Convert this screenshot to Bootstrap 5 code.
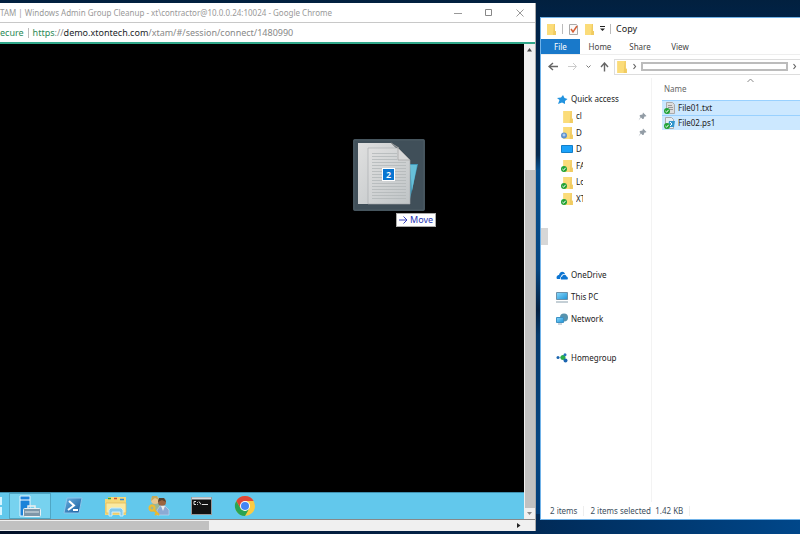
<!DOCTYPE html>
<html lang="en">
<head>
<meta charset="utf-8">
<meta name="viewport" content="width=device-width, initial-scale=1">
<title>Remote session and file explorer</title>
<link href="https://cdn.jsdelivr.net/npm/bootstrap@5.3.0/dist/css/bootstrap.min.css" rel="stylesheet">
<style>
body{font-family:"Noto Sans","Open Sans",sans-serif;font-size:8px;line-height:12px;color:#222;
 background:linear-gradient(90deg,#020f27 0,#04244a 60%,#002d5c 70%,#00478a 100%) bottom/100% 20px no-repeat,linear-gradient(#02203f,#002348 24px,#04294f 155px,#07508f 170px,#064580 270px,#041f40 310px,#06396a 335px,#064580 440px,#003c78)}
button{border:0;background:none;padding:0;color:inherit}
a{color:inherit;text-decoration:none}
svg{display:block;flex:none}
.desk{gap:4px;padding-top:3px}
.browser{width:67%;margin-bottom:3px;background:#fff;border-right:1px solid #aaa}
.caption{height:20px;border-bottom:1px solid #c8c8c8;color:#999}
.caption button{width:31px;height:19px;display:flex;align-items:center;justify-content:center}
.addr{height:21px;border-bottom:2px solid #30a78a;font-size:9px;color:#888;gap:4px}
.green{color:#2b8a57}
.sep{width:1px;height:10px;background:#bbb}
.bar{height:27px;background:#62c8ec;border-top:1px solid #3f8fae}
.bar button{width:43px;display:flex;align-items:center;justify-content:center}
.bar .start{width:9px;justify-content:flex-start}
.bar .current{width:42px;background:#77d2ef;border:1px solid #4fa6c4}
.vscroll{width:11px;background:#f0f0f0}
.vtrack{padding-top:114px}
.vthumb{background:#c1c1c1;flex:1;margin-left:1px}
.hscroll{height:12px;background:#f0f0f0;border-top:1px solid #888}
.hthumb{width:39%;background:#c1c1c1;height:9px}
.drag{left:353px;top:95px}
.move{left:396px;top:169px;background:#fff;color:#2734b4;border:1px solid #aaa;height:14px;padding:0 2px;gap:2px;font-size:9px}
.explorer{margin-top:14px;margin-bottom:14px;background:#fff;border:1px solid #70b2e8;border-right:0}
.quick{height:21px;padding-left:5px;gap:5px;font-size:9px}
.tabs{height:16px;border-bottom:1px solid #eee;color:#444}
.tabs button{width:40px}
.tabs .file{width:39px;background:#1979ca;color:#fff}
.tools{height:23px;padding-left:7px}
.crumb{height:16px;border:1px solid #ddd;border-right:0;gap:4px;padding:0 3px 0 1px}
.crumb input{border:2px solid #bcbcbc;height:9px;min-width:0;padding:0;border-radius:0;background:#fff}
.side{width:110px;font-size:8px;padding-left:15px}
.side a{gap:3px;height:12px}
.head{margin-top:15px}
.tree{height:99px;display:grid;grid-template-rows:repeat(6,1fr);align-items:center;padding:0 4px 0 5px;margin-top:3px}
.tree .cut{width:7px;overflow:hidden;white-space:nowrap}
.roots{display:grid;gap:10px;margin-top:62px}
.group{margin-top:27px}
.files{padding-left:10px;border-left:1px solid #f3f3f3}
.files th{font-weight:400;color:#666;height:22px;padding:0 0 0 2px;vertical-align:bottom;position:relative}
.files th div{height:19px;padding-top:2px}
.files th svg{position:absolute;left:85px;top:0}
.files td{background:#cce8ff;border-top:1px solid #99d1ff;height:15px;padding:0 2px;line-height:13px}
.files .row-line{gap:3px}
.nub{left:0;top:210px;width:7px;height:17px;background:#d7d7d7}
.status{height:17px;padding-left:9px;color:#405060;gap:6px}
.status .sep{background:#eee}
</style>
<script src="https://cdn.jsdelivr.net/npm/bootstrap@5.3.0/dist/js/bootstrap.bundle.min.js"></script>
</head>
<body>
<svg width="0" height="0" class="position-absolute" aria-hidden="true">
 <defs>
 <linearGradient id="paper" x2="1" y2="1"><stop stop-color="#e0e0e0"/><stop offset="1" stop-color="#bfc4c6"/></linearGradient>
 <linearGradient id="blue" x2="1" y2="1"><stop stop-color="#8ad8fa"/><stop offset="1" stop-color="#1c93d8"/></linearGradient>
 <linearGradient id="ps" x2="1" y2="1"><stop stop-color="#6ab0e0"/><stop offset="1" stop-color="#155a9c"/></linearGradient>
 <symbol id="folder" viewBox="0 0 11 12"><path d="M1 1h8v7h1v4H1z" fill="#fbdc79"/><path d="M8 1h1v7h1v4H7z" fill="#f0cb62"/></symbol>
 <symbol id="ok" viewBox="0 0 6 6"><circle cx="3" cy="3" r="3" fill="#22a336"/><path d="M1.400 3l1.200 1.200 2-2.400" stroke="#fff" fill="none"/></symbol>
 <symbol id="pin" viewBox="0 0 9 9"><path d="M5 .5L8.500 4 7.500 4.500 6.500 4.500 5.500 7 4.500 7 3 5.500 .5 8.500 2.500 5 1.500 4 2 3 4.500 2.500z" fill="#929ca5"/></symbol>
 <symbol id="chev" viewBox="0 0 5 7"><path d="M1.500 1l2 2.500-2 2.500" fill="none" stroke="#666" stroke-width="1.200"/></symbol>
 </defs>
</svg>
<main class="desk d-flex vh-100 overflow-hidden">
 <section class="browser d-flex flex-column flex-shrink-0 overflow-hidden">
  <header class="caption d-flex align-items-center justify-content-between flex-shrink-0 text-nowrap">
   <span>TAM | Windows Admin Group Cleanup - xt\contractor@10.0.0.24:10024 - Google Chrome</span>
   <div class="d-flex">
    <button aria-label="Minimize"><svg width="8" height="8"><path d="M0 4.500h8" stroke="#999"/></svg></button>
    <button aria-label="Maximize"><svg width="8" height="8"><path d="M.5.5h6v6h-6z" fill="none" stroke="#888"/></svg></button>
    <button aria-label="Close"><svg width="8" height="8"><path d="M.5.5l7 7m0-7l-7 7" stroke="#999"/></svg></button>
   </div>
  </header>
  <div class="addr d-flex align-items-center flex-shrink-0 text-nowrap">
   <span class="green">ecure</span><span class="sep"></span>
   <span><span class="green">https</span>://<span class="text-dark">demo.xtontech.com</span>/xtam/#/session/connect/1480990</span>
  </div>
  <div class="d-flex flex-grow-1">
   <div class="flex-grow-1 d-flex flex-column bg-black position-relative">
    <div class="flex-grow-1"></div>
    <svg class="drag position-absolute" width="72" height="72">
     <rect width="72" height="72" rx="2" fill="#404f59"/><path d="M1 1h70v70H1z" fill="none" stroke="#4d5c65"/>
     <path d="M50 25h15l-8 35h-7z" fill="#4198b8"/><path d="M57 26h7l-5 26z" fill="#67bfd8"/>
     <path d="M5 4h33l8 8v53H5z" fill="url(#paper)"/>
     <path d="M15 9h30l12 12v44H15z" fill="url(#paper)" stroke="#a5aaad" stroke-width=".6"/>
     <path d="M38 4l8 5h-1l12 12H45V9z" fill="#d8d8d8" stroke="#999" stroke-width=".6"/>
     <path d="M19 14.500h25M19 17.500h25M19 20.500h25M19 23.500h34M19 26.500h34M19 29.500h34M19 32.500h34M19 35.500h34M19 38.500h34M19 41.500h34M19 44.500h34M19 47.500h34M19 50.500h34M19 53.500h34M19 56.500h34M19 59.500h34" stroke="#b3b7b9" stroke-width=".8"/>
     <rect x="29.500" y="29.500" width="12" height="12" fill="#0875d1" stroke="#fff"/>
     <text x="35.500" y="39" text-anchor="middle" fill="#fff" font-size="9" font-weight="600">2</text>
    </svg>
    <div class="move position-absolute d-flex align-items-center"><svg width="9" height="8"><path d="M0 4h8M4.500.5L8 4 4.500 7.500" fill="none" stroke="#3942b8"/></svg>Move</div>
    <nav class="bar d-flex flex-shrink-0">
     <button class="start" aria-label="Start"><svg width="2" height="18"><path d="M0 0h2v8H0zM0 10h2v8H0z" fill="#d5f4ff"/></svg></button>
     <button class="current" aria-label="Server Manager"><svg width="24" height="23"><path d="M2 1h10v20H2z" fill="#1b82d9" stroke="#e4f6ff"/><path d="M2 5h10" stroke="#fff"/><path d="M10 14v-3h7v3" fill="none" stroke="#eee" stroke-width="1.500"/><rect x="5.500" y="13.500" width="17" height="8" rx="1" fill="#7e97a8" stroke="#e9f1f4"/><path d="M7 17h14" stroke="#dce5e9"/></svg></button>
     <button aria-label="PowerShell"><svg width="20" height="18"><path d="M4 1h15l-3 15H1z" fill="url(#ps)" stroke="#8ac5eb"/><path d="M6 4l5 4.500L5 13M10 13h5" stroke="#fff" stroke-width="2" fill="none"/></svg></button>
     <button aria-label="Files"><svg width="24" height="21"><path d="M1 3h3V1h18v18H1z" fill="#f5d878"/><path d="M2 7h20v10H2z" fill="#fbe9a0" stroke="#dfb856" stroke-width=".7"/><path d="M4 2.500h3" stroke="#2fa43b" stroke-width="1.500"/><path d="M10 2.500h3" stroke="#ce4d35" stroke-width="1.500"/><path d="M16 3.500h4" stroke="#3689d2" stroke-width="1.500"/><path d="M5 20v-6l2-2h10l2 2v6h-3v-4H8v4z" fill="#83c9ec" stroke="#c9edff"/></svg></button>
     <button aria-label="Users"><svg width="22" height="22"><path d="M2 17V10l3-2h5l2 4v5z" fill="#9cb797"/><circle cx="7" cy="5" r="4" fill="#e8c690"/><path d="M3 6l1-5h5l2 4-4-2z" fill="#c2a95c"/><circle cx="14" cy="7" r="4" fill="#9b6440"/><path d="M10 7l1-4h5l2 4-4-2z" fill="#54412f"/><path d="M9 20v-5l3-4h5l4 4v5z" fill="#8caad4" stroke="#cddcf0" stroke-width=".6"/><path d="M13 11l2 5 2-5z" fill="#eee"/><circle cx="4" cy="13" r="2.500" fill="none" stroke="#eebd32" stroke-width="2"/><path d="M6 15l5 5M9 18l-2 2" stroke="#edb929" stroke-width="2"/></svg></button>
     <button aria-label="Command Prompt"><svg width="21" height="18"><rect x=".5" y=".5" width="20" height="17" fill="#111" stroke="#999"/><path d="M1 1.500h19" stroke="#d6dce0" stroke-width="2"/><path d="M5 4.500H3v3h2M6.500 5v.8M6.500 7v.8M8 4.500l2 3M11 7.500h6" stroke="#ddd" fill="none"/></svg></button>
     <button aria-label="Chrome"><svg width="22" height="22" viewBox="0 0 22 22"><circle cx="11" cy="11" r="10" fill="#fbcb42"/><path d="M2.300 6A10 10 0 0 1 19.700 6H11L6.700 13.500z" fill="#df4738"/><path d="M2.300 6A10 10 0 0 0 11 21l4.300-7.500H6.700z" fill="#2aa452"/><circle cx="11" cy="11" r="5" fill="#fff"/><circle cx="11" cy="11" r="4" fill="#4285f4"/></svg></button>
    </nav>
   </div>
   <div class="vscroll d-flex flex-column flex-shrink-0">
    <svg width="11" height="12"><path d="M3 7.500L5.500 4 8 7.500z" fill="#444"/></svg>
    <div class="vtrack flex-grow-1 d-flex flex-column"><div class="vthumb"></div></div>
    <svg width="11" height="11"><path d="M3 4L5.500 7 8 4z" fill="#888"/></svg>
   </div>
  </div>
  <div class="hscroll d-flex align-items-center justify-content-between flex-shrink-0"><div class="hthumb"></div><svg width="21" height="9"><path d="M3 2l3.500 2.500L3 7z" fill="#222"/></svg></div>
 </section>

 <section class="explorer position-relative d-flex flex-column flex-grow-1 overflow-hidden">
  <header class="quick d-flex align-items-center flex-shrink-0">
   <svg width="11" height="12"><use href="#folder"/></svg><span class="sep"></span>
   <svg width="11" height="12"><path d="M1.500 1.500h7l1 1v9h-8z" fill="#fafafa" stroke="#aaa"/><path d="M3 6l2 3 4-6" fill="none" stroke="#d65f35" stroke-width="1.500"/></svg>
   <svg width="11" height="12"><use href="#folder"/></svg>
   <svg width="5" height="7"><path d="M0 1.500h5" stroke="#222"/><path d="M0 3.500h5L2.500 6z" fill="#222"/></svg>
   <span class="sep"></span><span>Copy</span>
  </header>
  <nav class="tabs d-flex flex-shrink-0"><button class="file">File</button><button>Home</button><button>Share</button><button>View</button></nav>
  <div class="tools d-flex align-items-center flex-shrink-0">
   <button aria-label="Back"><svg width="11" height="9"><path d="M10 4.500H1M5 1L1 4.500 5 8" fill="none" stroke="#666" stroke-width="1.400"/></svg></button>
   <button class="ms-2" aria-label="Forward"><svg width="11" height="9"><path d="M1 4.500h8M6 1l3.500 3.500L6 8" fill="none" stroke="#ccc"/></svg></button>
   <button class="ms-2" aria-label="Recent"><svg width="5" height="5"><path d="M.5 1.500l2 2 2-2" fill="none" stroke="#777"/></svg></button>
   <button class="ms-2 me-1" aria-label="Up"><svg width="11" height="10"><path d="M5.500 9.500V1M2 5l3.500-4L9 5" fill="none" stroke="#666" stroke-width="1.400"/></svg></button>
   <div class="crumb d-flex align-items-center flex-grow-1"><svg width="12" height="13"><use href="#folder"/></svg><svg width="5" height="7"><use href="#chev"/></svg><input class="flex-grow-1" aria-label="Path"><svg width="5" height="7"><use href="#chev"/></svg></div>
  </div>
  <div class="d-flex flex-grow-1">
   <nav class="side flex-shrink-0">
    <a href="#" class="head d-flex align-items-center"><svg width="12" height="11"><path d="M7 1l1.500 3 3 1-2.500 2v3L6 8.500 2 10l1.500-4L1 4l4-.5z" fill="#2293df"/></svg>Quick access</a>
    <div class="tree">
     <a href="#" class="d-flex align-items-center"><svg width="12" height="13"><use href="#folder" x="1" width="12" height="13"/></svg><span class="cut">cl</span><svg class="ms-auto" width="9" height="9"><use href="#pin"/></svg></a>
     <a href="#" class="d-flex align-items-center"><svg width="12" height="13"><use href="#folder" x="1" width="12" height="13"/><circle cx="3" cy="9.500" r="3" fill="#5c91d0"/><path d="M1.500 9h3M3 7.500v3" stroke="#dcecff" stroke-width=".8"/></svg><span class="cut">D</span><svg class="ms-auto" width="9" height="9"><use href="#pin"/></svg></a>
     <a href="#" class="d-flex align-items-center"><svg width="12" height="10"><path d="M.5 1.500h11v7H.5z" fill="#1ba2fa" stroke="#147ec8"/></svg><span class="cut">D</span></a>
     <a href="#" class="d-flex align-items-center"><svg width="12" height="13"><use href="#folder" x="1" width="12" height="13"/><use href="#ok" y="7" width="6" height="6"/></svg><span class="cut">FA</span></a>
     <a href="#" class="d-flex align-items-center"><svg width="12" height="13"><use href="#folder" x="1" width="12" height="13"/><use href="#ok" y="7" width="6" height="6"/></svg><span class="cut">Lo</span></a>
     <a href="#" class="d-flex align-items-center"><svg width="12" height="13"><use href="#folder" x="1" width="12" height="13"/><use href="#ok" y="7" width="6" height="6"/></svg><span class="cut">XT</span></a>
    </div>
    <div class="roots">
     <a href="#" class="d-flex align-items-center"><svg width="12" height="9"><path d="M1 8C-.5 5.500 2 3.500 3 4c1-4 5-4 6-1-2-.5-4 1-4 2.500C4 6 4 7 4 8z" fill="#0c75d2"/><path d="M5 8.500C4 6 5.500 5.500 6 6c.5-3 4-3 4.500-.5C12.500 6 12 8.500 11 8.500z" fill="#0c75d2"/></svg>OneDrive</a>
     <a href="#" class="d-flex align-items-center"><svg width="12" height="11"><path d="M.5.500h11v7H.5z" fill="url(#blue)" stroke="#6b91aa"/><path d="M0 10h12" stroke="#8aa0ad"/></svg>This PC</a>
     <a href="#" class="d-flex align-items-center"><svg width="12" height="12"><circle cx="8" cy="4.500" r="4" fill="#5793ae"/><path d="M.5 4.500h7v5h-7z" fill="url(#blue)" stroke="#3d91c4"/><path d="M2 11h4" stroke="#9ab"/></svg>Network</a>
    </div>
    <a href="#" class="group d-flex align-items-center"><svg width="12" height="10"><path d="M3 4.500l6-3v6z" fill="#8ac7db"/><circle cx="7" cy="4.500" r="2.500" fill="#2cae4a"/><circle cx="2" cy="4.500" r="1.500" fill="#1c65b0"/><circle cx="9" cy="1.800" r="1.500" fill="#2674bd"/><circle cx="9.500" cy="7.500" r="2" fill="#1c65b0"/></svg>Homegroup</a>
   </nav>
   <div class="files flex-grow-1">
    <table class="w-100">
     <thead><tr><th scope="col"><div>Name</div><svg width="7" height="5"><path d="M.5 4l3-3 3 3" fill="none" stroke="#888"/></svg></th></tr></thead>
     <tbody>
      <tr><td><div class="row-line d-flex align-items-center"><svg width="11" height="12"><path d="M2.500.5h6l2 2v9h-8z" fill="#ddd" stroke="#aaa"/><path d="M4 3.500h4M4 5.500h5M4 7.500h5" stroke="#999"/><use href="#ok" y="6" width="6" height="6"/></svg>File01.txt</div></td></tr>
      <tr><td><div class="row-line d-flex align-items-center"><svg width="11" height="12"><path d="M1.500.5h6l2 2v9h-8z" fill="#e7edf2" stroke="#aaa"/><path d="M5 4h6l-1 6H4z" fill="#3295cb"/><path d="M6 5l2 2-2 2" fill="none" stroke="#fff"/><use href="#ok" y="6" width="6" height="6"/></svg>File02.ps1</div></td></tr>
     </tbody>
    </table>
   </div>
  </div>
  <div class="nub position-absolute"></div>
  <footer class="status d-flex align-items-center flex-shrink-0"><span>2 items</span><span class="sep"></span><span>2 items selected&nbsp; 1.42 KB</span><span class="sep"></span></footer>
 </section>
</main>
</body>
</html>
